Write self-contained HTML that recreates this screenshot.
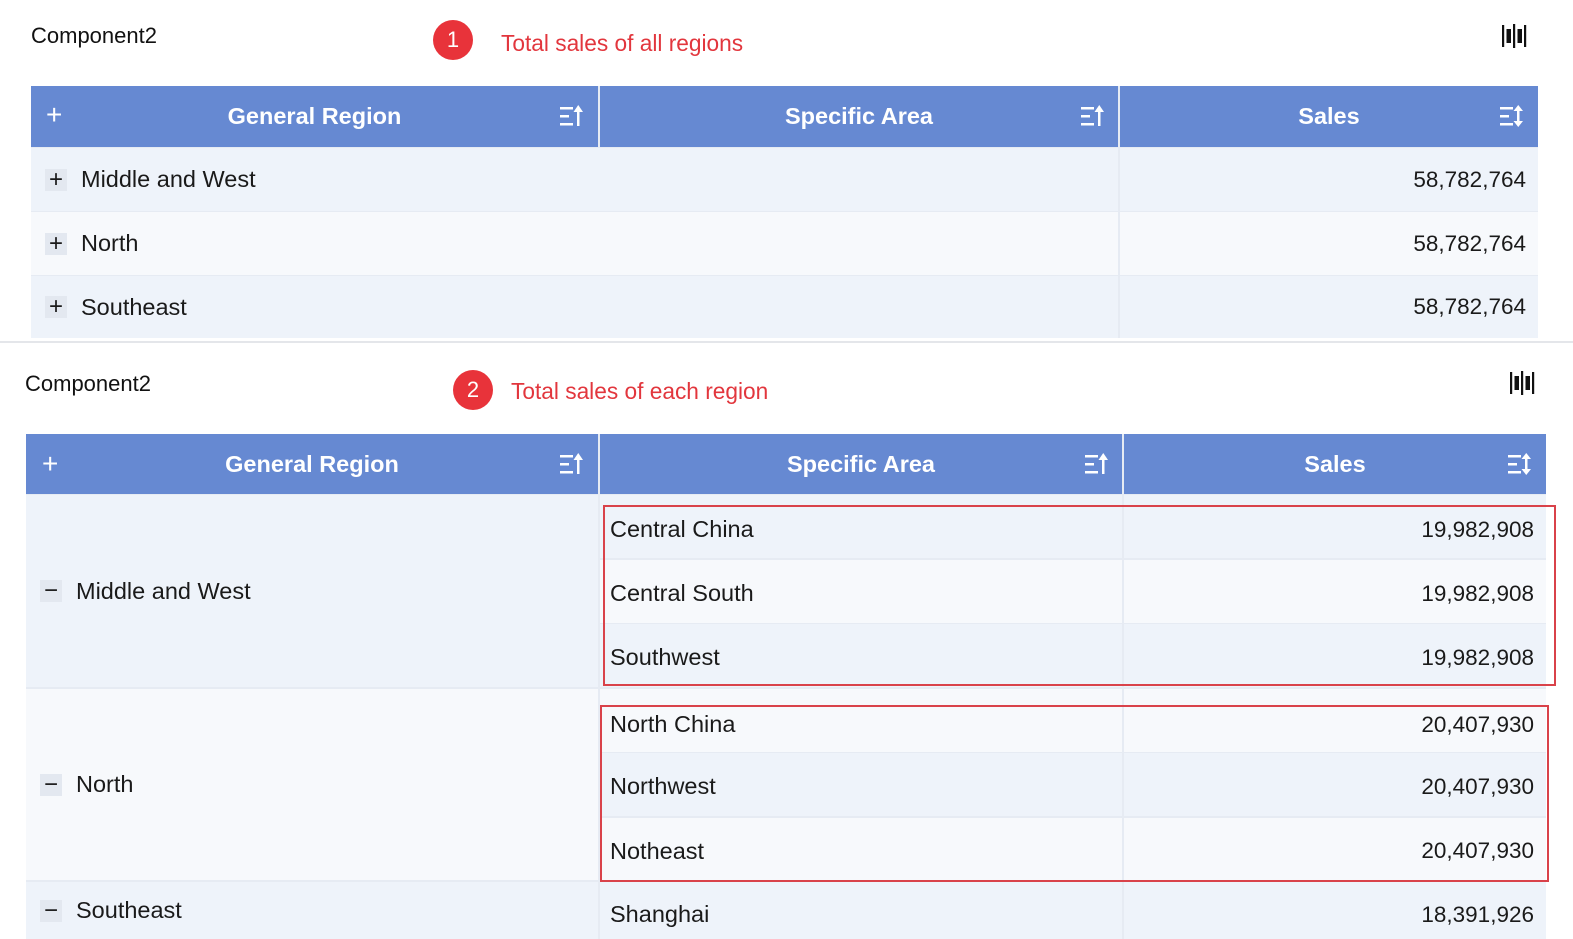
<!DOCTYPE html>
<html><head><meta charset="utf-8"><style>
*{margin:0;padding:0;box-sizing:border-box}
body{width:1573px;height:939px;background:#fff;position:relative;overflow:hidden;font-family:"Liberation Sans",sans-serif;color:#1a1a1a}
.a{position:absolute}
.title{font-size:22px;color:#111}
.circ{width:40px;height:40px;border-radius:50%;background:#e8333a;color:#fff;font-size:22px;text-align:center;line-height:40px}
.note{font-size:22.7px;color:#e2363d}
.hd{background:#6689d2;color:#fff;font-weight:bold;font-size:23.5px;display:flex;align-items:center;justify-content:center}
.c{font-size:23.5px;display:flex;align-items:center}
.r{justify-content:flex-end;padding-right:12px;font-size:22.5px}
.l{padding-left:10px}
.b1{background:#eef3fa}.b2{background:#f7f9fc}
.pl{display:inline-block;width:22px;height:22px;background:#e3e8f0;margin-right:14px;position:relative;text-align:center;line-height:22px;font-size:24px}
.box{position:absolute;border:2px solid #d9424a}
</style></head><body>
<svg width="0" height="0" style="position:absolute"><defs>
<g id="su"><rect x="0" y="2" width="13" height="2.5" fill="#fff"/><rect x="0" y="10" width="9" height="2.5" fill="#fff"/><rect x="0" y="18" width="13" height="2.5" fill="#fff"/><rect x="17" y="4" width="2.5" height="17" fill="#fff"/><path d="M13.5 7 L18.25 0 L23 7Z" fill="#fff"/></g>
<g id="sd"><rect x="0" y="2" width="13" height="2.5" fill="#fff"/><rect x="0" y="10" width="9" height="2.5" fill="#fff"/><rect x="0" y="18" width="13" height="2.5" fill="#fff"/><rect x="17" y="5" width="2.5" height="12" fill="#fff"/><path d="M13.5 6 L18.25 0 L23 6Z M13.5 16 L18.25 22 L23 16Z" fill="#fff"/></g>
<g id="bar"><rect x="0" y="1" width="2.2" height="22" fill="#111"/><rect x="4.5" y="5" width="4.5" height="14" fill="#111"/><rect x="11" y="0" width="2.2" height="24" fill="#111"/><rect x="15.5" y="5" width="4.5" height="14" fill="#111"/><rect x="22" y="1" width="2.2" height="22" fill="#111"/></g>
</defs></svg>

<div class="a title" style="left:31px;top:23px">Component2</div>
<div class="a circ" style="left:433px;top:20px">1</div>
<div class="a note" style="left:501px;top:30px">Total sales of all regions</div>
<svg class="a" style="left:1502px;top:24px" width="25" height="24"><use href="#bar"/></svg>

<div class="a" style="left:31px;top:86px;width:1507px;height:252px;background:#e6ebf3"></div>
<div class="a hd" style="left:31px;top:86px;width:567px;height:61px">General Region</div>
<div class="a hd" style="left:600px;top:86px;width:518px;height:61px">Specific Area</div>
<div class="a hd" style="left:1120px;top:86px;width:418px;height:61px">Sales</div>
<div class="a" style="left:46px;top:100px;color:#fff;font-size:28px;line-height:30px">+</div>
<svg class="a" style="left:560px;top:105px" width="24" height="22"><use href="#su"/></svg>
<svg class="a" style="left:1081px;top:105px" width="24" height="22"><use href="#su"/></svg>
<svg class="a" style="left:1500px;top:105px" width="24" height="22"><use href="#sd"/></svg>

<div class="a c l b1" style="left:31px;top:148px;width:1087px;height:63px;padding-left:14px"><span class="pl">+</span>Middle and West</div>
<div class="a c r b1" style="left:1120px;top:148px;width:418px;height:63px">58,782,764</div>
<div class="a c l b2" style="left:31px;top:212px;width:1087px;height:63px;padding-left:14px"><span class="pl">+</span>North</div>
<div class="a c r b2" style="left:1120px;top:212px;width:418px;height:63px">58,782,764</div>
<div class="a c l b1" style="left:31px;top:276px;width:1087px;height:62px;padding-left:14px"><span class="pl">+</span>Southeast</div>
<div class="a c r b1" style="left:1120px;top:276px;width:418px;height:62px">58,782,764</div>

<div class="a" style="left:0;top:341px;width:1573px;height:2px;background:#e4e6ea"></div>

<div class="a title" style="left:25px;top:371px">Component2</div>
<div class="a circ" style="left:453px;top:370px">2</div>
<div class="a note" style="left:511px;top:378px">Total sales of each region</div>
<svg class="a" style="left:1510px;top:371px" width="25" height="24"><use href="#bar"/></svg>

<div class="a" style="left:26px;top:434px;width:1520px;height:505px;background:#e6ebf3"></div>
<div class="a hd" style="left:26px;top:434px;width:572px;height:60px">General Region</div>
<div class="a hd" style="left:600px;top:434px;width:522px;height:60px">Specific Area</div>
<div class="a hd" style="left:1124px;top:434px;width:422px;height:60px">Sales</div>
<div class="a" style="left:42px;top:449px;color:#fff;font-size:28px;line-height:30px">+</div>
<svg class="a" style="left:560px;top:453px" width="24" height="22"><use href="#su"/></svg>
<svg class="a" style="left:1085px;top:453px" width="24" height="22"><use href="#su"/></svg>
<svg class="a" style="left:1508px;top:453px" width="24" height="22"><use href="#sd"/></svg>

<div class="a c b1" style="left:26px;top:495px;width:572px;height:192px;padding-left:14px"><span class="pl">−</span>Middle and West</div>
<div class="a c b2" style="left:26px;top:689px;width:572px;height:191px;padding-left:14px"><span class="pl">−</span>North</div>
<div class="a c b1" style="left:26px;top:882px;width:572px;height:57px;padding-left:14px"><span class="pl">−</span>Southeast</div>

<div class="a c l b1" style="left:600px;top:495px;width:522px;height:63px;padding-top:6px">Central China</div>
<div class="a c r b1" style="left:1124px;top:495px;width:422px;height:63px;padding-top:6px">19,982,908</div>
<div class="a c l b2" style="left:600px;top:560px;width:522px;height:63px;padding-top:4px">Central South</div>
<div class="a c r b2" style="left:1124px;top:560px;width:422px;height:63px;padding-top:4px">19,982,908</div>
<div class="a c l b1" style="left:600px;top:624px;width:522px;height:63px;padding-top:4px">Southwest</div>
<div class="a c r b1" style="left:1124px;top:624px;width:422px;height:63px;padding-top:4px">19,982,908</div>
<div class="a c l b2" style="left:600px;top:689px;width:522px;height:63px;align-items:flex-end;padding-bottom:14px">North China</div>
<div class="a c r b2" style="left:1124px;top:689px;width:422px;height:63px;align-items:flex-end;padding-bottom:14px">20,407,930</div>
<div class="a c l b1" style="left:600px;top:753px;width:522px;height:63px;padding-top:4px">Northwest</div>
<div class="a c r b1" style="left:1124px;top:753px;width:422px;height:63px;padding-top:4px">20,407,930</div>
<div class="a c l b2" style="left:600px;top:818px;width:522px;height:62px;padding-top:4px">Notheast</div>
<div class="a c r b2" style="left:1124px;top:818px;width:422px;height:62px;padding-top:4px">20,407,930</div>
<div class="a c l b1" style="left:600px;top:882px;width:522px;height:57px;padding-top:8px">Shanghai</div>
<div class="a c r b1" style="left:1124px;top:882px;width:422px;height:57px;padding-top:8px">18,391,926</div>

<div class="box" style="left:603px;top:505px;width:953px;height:181px"></div>
<div class="box" style="left:600px;top:705px;width:949px;height:177px"></div>
</body></html>
